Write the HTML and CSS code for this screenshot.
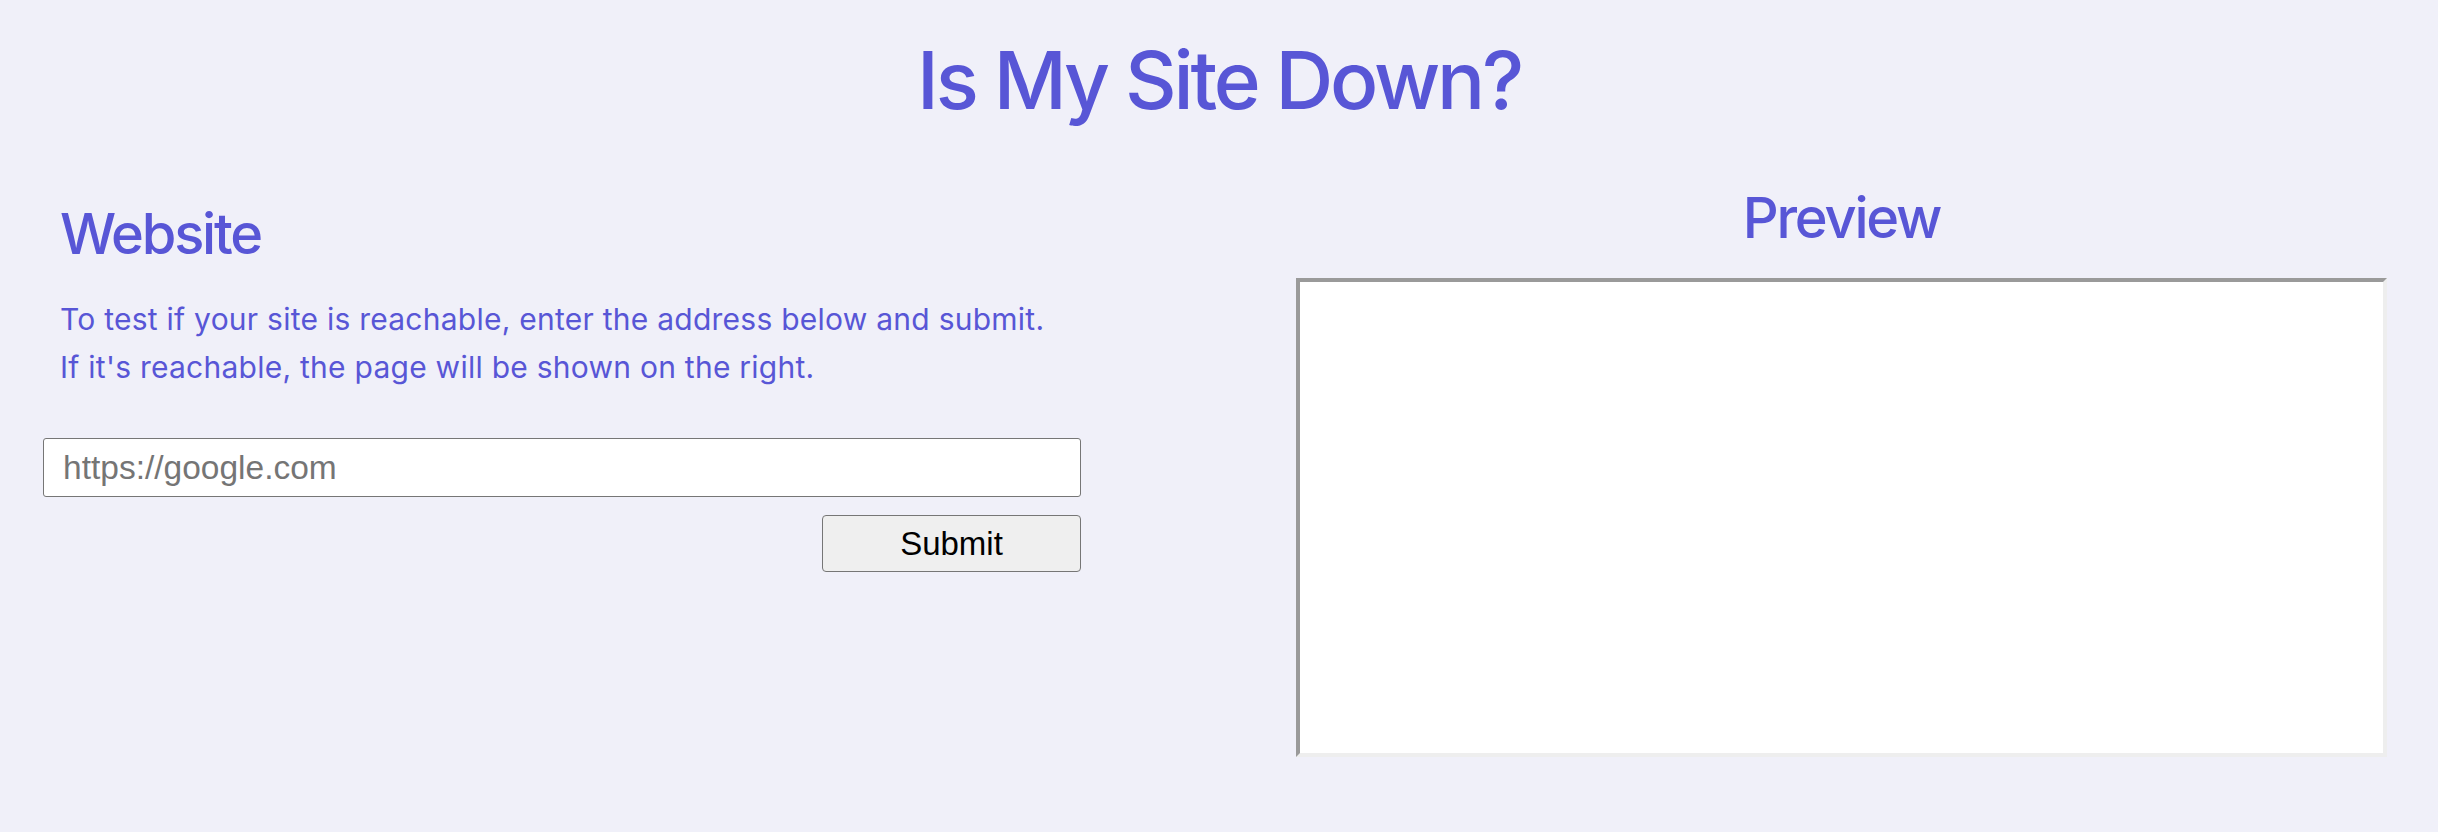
FILE: index.html
```html
<!DOCTYPE html>
<html>
<head>
	<meta charset="utf-8">
	<title>Is My Site Down?</title>
	<link rel="stylesheet" href="styles.css">
</head>
<body>
	<h1 class="title">Is My Site Down?</h1>

	<div class="columns">
		<form id="site_form" class="website">
			<h2 class="website_heading">Website</h2>
			<p class="intro">
				To test if your site is reachable, enter the address below and submit.<br>
				If it's reachable, the page will be shown on the right.
			</p>
			<input id="site_url" class="url" type="text" name="url" placeholder="https://google.com">
			<div class="controls">
				<input id="submit" class="submit" type="submit" value="Submit">
			</div>
		</form>

		<div class="preview">
			<h2 class="preview_heading">Preview</h2>
			<iframe id="preview_frame" class="preview_frame" title="Preview"></iframe>
		</div>
	</div>

	<script type="text/javascript">
	/* Form Logic */
	window.addEventListener("load", function () {
		var form = document.getElementById("site_form");
		form.addEventListener("submit", function (event) {
			event.preventDefault();
			var url = document.getElementById("site_url").value;
			if (url) {
				document.getElementById("preview_frame").src = url;
			}
		});
	});
	</script>
</body>
</html>
```

FILE: styles.css
```css
/* Base */

html, body { margin: 0; padding: 0; }
body {
	background-color: #f0f0f9;
	color: #5856d6;
	font-family: Inter, "Noto Sans", sans-serif;
}
h1, h2, p { margin: 0; }
h1, h2 { font-weight: 550; letter-spacing: -0.04em; }

/* Title */

.title {
	margin-top: 40px;
	font-size: 80px;
	line-height: 80px;
	text-align: center;
}

/* Columns */

.columns {
	display: grid;
	grid-template-columns: 1038px 1fr;
	column-gap: 215px;
	padding: 0 51px 0 43px;
	margin-top: 70px;
}

/* Website form */

.website { display: flex; flex-direction: column; margin-top: 16px; }
.website_heading {
	padding-left: 17px;
	font-size: 56px;
	line-height: 56px;
}
.intro {
	margin-top: 33px;
	padding-left: 17px;
	font-size: 30px;
	line-height: 48px;
	font-weight: 400;
	letter-spacing: 0.25px;
}
.url {
	box-sizing: border-box;
	height: 59px;
	margin: 47px 0 0;
	padding: 0 19px;
	border: 1px solid #767676;
	border-radius: 3px;
	background-color: #fff;
	font-family: "Liberation Sans", Arial, sans-serif;
	font-size: 33.5px;
	color: #000;
}
.url::placeholder { color: #757575; }
.controls { display: flex; justify-content: flex-end; margin-top: 18px; }
.submit {
	box-sizing: border-box;
	width: 259px;
	height: 57px;
	margin: 0;
	border: 1px solid #767676;
	border-radius: 4px;
	background-color: #efefef;
	font-family: "Liberation Sans", Arial, sans-serif;
	font-size: 33px;
	color: #000;
}

/* Preview */

.preview { display: flex; flex-direction: column; }
.preview_heading {
	font-size: 56px;
	line-height: 56px;
	text-align: center;
}
.preview_frame {
	box-sizing: border-box;
	width: 100%;
	height: 479px;
	margin-top: 32px;
	border: 4px solid;
	border-color: #9a9a9a #eeeeee #eeeeee #9a9a9a;
	background-color: #fff;
}
```
